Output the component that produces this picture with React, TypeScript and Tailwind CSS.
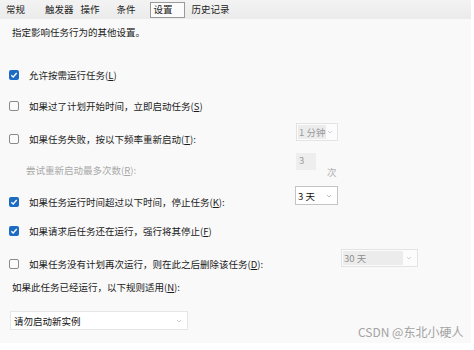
import type { ReactNode } from 'react';

const font = { fontFamily: '"Microsoft YaHei", "Noto Sans CJK SC", "Noto Sans", sans-serif' };

function Check({ checked }: { checked: boolean }) {
  if (checked) {
    return (
      <div className="w-[10px] h-[10px] rounded-[2px] bg-[#1d6cc4] flex items-center justify-center shrink-0">
        <svg width="8" height="8" viewBox="0 0 8 8">
          <path d="M1.3 4.2 L3.2 6 L6.7 2" stroke="white" strokeWidth="1.3" fill="none" />
        </svg>
      </div>
    );
  }
  return <div className="w-[10px] h-[10px] rounded-[2px] border border-[#8a8a8a] bg-[#fbfbfb] shrink-0" />;
}

function Chevron({ color = '#b0b0b0' }: { color?: string }) {
  return (
    <svg width="6" height="4" viewBox="0 0 6 4" className="shrink-0">
      <path d="M1 1 L3 3 L5 1" stroke={color} strokeWidth="0.8" fill="none" />
    </svg>
  );
}

function Label({ children, className = '' }: { children: ReactNode; className?: string }) {
  return <span className={`leading-[14px] whitespace-nowrap ${className}`}>{children}</span>;
}

export default function App() {
  return (
    <div className="w-[474px] h-[350px] bg-white" style={font}>
      <div className="w-[471px] h-[343px] bg-[#f9f9f9] relative text-[9.5px] text-[#1b1b1b]">
        {/* Tabs */}
        <div className="h-[19px] bg-gradient-to-b from-[#f3f3f3] to-[#ebebeb] flex items-center text-[#222]">
          <span className="ml-[6px]">常规</span>
          <span className="ml-[20px]">触发器</span>
          <span className="ml-[7px]">操作</span>
          <span className="ml-[17px]">条件</span>
          <span className="ml-[14px] h-[16px] w-[35px] border border-[#9a9a9a] bg-[#fbfbfb] flex items-center pl-[3px]">设置</span>
          <span className="ml-[7px]">历史记录</span>
        </div>

        <div className="flex flex-col">
          <Label className="ml-[12px] mt-[6px]">指定影响任务行为的其他设置。</Label>

          {/* Row 1 */}
          <div className="flex items-center ml-[9px] mt-[29px] h-[14px]">
            <Check checked />
            <Label className="ml-[10px]">允许按需运行任务(<u>L</u>)</Label>
          </div>

          {/* Row 2 */}
          <div className="flex items-center ml-[9px] mt-[17px] h-[14px]">
            <Check checked={false} />
            <Label className="ml-[10px]">如果过了计划开始时间，立即启动任务(<u>S</u>)</Label>
          </div>

          {/* Row 3 */}
          <div className="flex items-start mt-[10px]">
            <div className="flex items-center ml-[9px] mt-[9px] w-[287px]">
              <Check checked={false} />
              <Label className="ml-[10px]">如果任务失败，按以下频率重新启动(<u>T</u>):</Label>
            </div>
            <div className="w-[42px] h-[18px] border border-[#e3e3e3] bg-[#fcfcfc] flex items-center justify-between pl-[1px] pr-[4px]">
              <span className="bg-[#ececec] text-[#9a9a9a] px-[1px] leading-[14px]">1 分钟</span>
              <Chevron color="#c8c8c8" />
            </div>
          </div>

          {/* Row 4 */}
          <div className="flex items-start mt-[7px]">
            <div className="ml-[26px] mt-[10px] w-[270px]">
              <Label className="text-[#a9a9a9]">尝试重新启动最多次数(<u>R</u>):</Label>
            </div>
            <div className="w-[20px] h-[17px] bg-[#eeeeee] text-[#9a9a9a] pl-[3px] leading-[14px]">3</div>
            <Label className="ml-[11px] mt-[12px] text-[#b0b0b0]">次</Label>
          </div>

          {/* Row 5 */}
          <div className="flex items-start mt-[7px]">
            <div className="flex items-center ml-[9px] mt-[9px] w-[286px]">
              <Check checked />
              <Label className="ml-[10px]">如果任务运行时间超过以下时间，停止任务(<u>K</u>):</Label>
            </div>
            <div className="w-[43px] h-[19px] border border-[#c4c4c4] bg-white flex items-center justify-between pl-[2px] pr-[5px] text-[#111]">
              <span className="leading-[14px]">3 天</span>
              <Chevron />
            </div>
          </div>

          {/* Row 6 */}
          <div className="flex items-center ml-[9px] mt-[15px] h-[14px]">
            <Check checked />
            <Label className="ml-[10px]">如果请求后任务还在运行，强行将其停止(<u>F</u>)</Label>
          </div>

          {/* Row 7 */}
          <div className="flex items-start mt-[11px]">
            <div className="flex items-center ml-[9px] mt-[8px] w-[332px]">
              <Check checked={false} />
              <Label className="ml-[10px]">如果任务没有计划再次运行，则在此之后删除该任务(<u>D</u>):</Label>
            </div>
            <div className="w-[77px] h-[18px] border border-[#e3e3e3] bg-[#fcfcfc] flex items-center justify-between pl-[1px] pr-[5px]">
              <span className="bg-[#ececec] text-[#8f8f8f] w-[60px] pl-[1px] leading-[14px]">30 天</span>
              <Chevron color="#c8c8c8" />
            </div>
          </div>

          <Label className="ml-[12px] mt-[9px]">如果此任务已经运行，以下规则适用(<u>N</u>):</Label>

          <div className="ml-[10px] mt-[17px] w-[178px] h-[19px] border border-[#e6e6e6] bg-white flex items-center justify-between pl-[3px] pr-[5px] text-[#111]">
            <span className="leading-[14px]">请勿启动新实例</span>
            <Chevron color="#c0c0c0" />
          </div>
        </div>

        {/* watermark */}
        <span className="absolute left-[358px] top-[325px] text-[12px] text-[#a3a3a3] leading-[14px] whitespace-nowrap">
          CSDN @东北小硬人
        </span>
      </div>
    </div>
  );
}
